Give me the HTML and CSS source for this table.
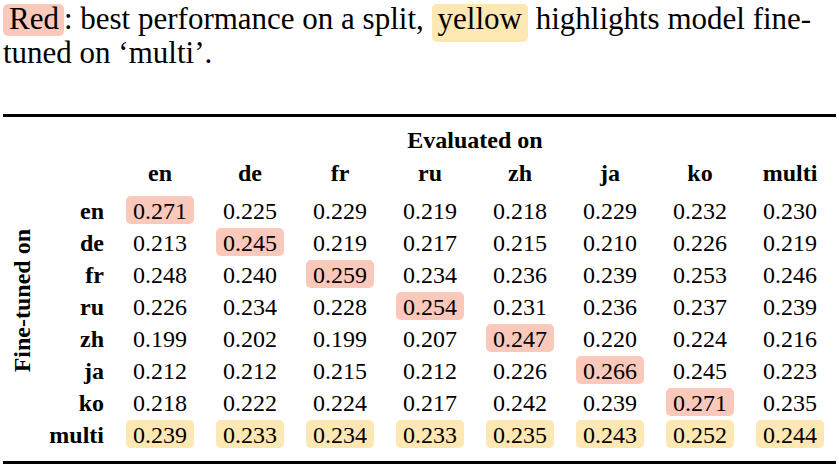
FILE: index.html
```html
<!DOCTYPE html>
<html>
<head>
<meta charset="utf-8">
<link rel="stylesheet" href="styles.css">
</head>
<body>
<p class="caption"><span class="hl red">Red</span>: best performance on a split, <span class="hl yellow">yellow</span> highlights model fine-<br>tuned on ‘multi’.</p>
<div class="table">
  <div class="grid">
    <div class="spacer"></div>
    <div class="group">Evaluated on</div>
    <div class="spacer"></div>
    <div class="colh">en</div><div class="colh">de</div><div class="colh">fr</div><div class="colh">ru</div><div class="colh">zh</div><div class="colh">ja</div><div class="colh">ko</div><div class="colh">multi</div>
    <div class="rot"><span>Fine-tuned on</span></div>

    <div class="rowh">en</div>
    <div class="c"><span class="b r">0.271</span></div><div class="c">0.225</div><div class="c">0.229</div><div class="c">0.219</div><div class="c">0.218</div><div class="c">0.229</div><div class="c">0.232</div><div class="c">0.230</div>

    <div class="rowh">de</div>
    <div class="c">0.213</div><div class="c"><span class="b r">0.245</span></div><div class="c">0.219</div><div class="c">0.217</div><div class="c">0.215</div><div class="c">0.210</div><div class="c">0.226</div><div class="c">0.219</div>

    <div class="rowh">fr</div>
    <div class="c">0.248</div><div class="c">0.240</div><div class="c"><span class="b r">0.259</span></div><div class="c">0.234</div><div class="c">0.236</div><div class="c">0.239</div><div class="c">0.253</div><div class="c">0.246</div>

    <div class="rowh">ru</div>
    <div class="c">0.226</div><div class="c">0.234</div><div class="c">0.228</div><div class="c"><span class="b r">0.254</span></div><div class="c">0.231</div><div class="c">0.236</div><div class="c">0.237</div><div class="c">0.239</div>

    <div class="rowh">zh</div>
    <div class="c">0.199</div><div class="c">0.202</div><div class="c">0.199</div><div class="c">0.207</div><div class="c"><span class="b r">0.247</span></div><div class="c">0.220</div><div class="c">0.224</div><div class="c">0.216</div>

    <div class="rowh">ja</div>
    <div class="c">0.212</div><div class="c">0.212</div><div class="c">0.215</div><div class="c">0.212</div><div class="c">0.226</div><div class="c"><span class="b r">0.266</span></div><div class="c">0.245</div><div class="c">0.223</div>

    <div class="rowh">ko</div>
    <div class="c">0.218</div><div class="c">0.222</div><div class="c">0.224</div><div class="c">0.217</div><div class="c">0.242</div><div class="c">0.239</div><div class="c"><span class="b r">0.271</span></div><div class="c">0.235</div>

    <div class="rowh">multi</div>
    <div class="c"><span class="b y">0.239</span></div><div class="c"><span class="b y">0.233</span></div><div class="c"><span class="b y">0.234</span></div><div class="c"><span class="b y">0.233</span></div><div class="c"><span class="b y">0.235</span></div><div class="c"><span class="b y">0.243</span></div><div class="c"><span class="b y">0.252</span></div><div class="c"><span class="b y">0.244</span></div>
  </div>
</div>
</body>
</html>
```
FILE: styles.css
```css
html, body {
  margin: 0;
  padding: 0;
  background: #fff;
}
body {
  font-family: "Liberation Serif", "Times New Roman", serif;
  color: #000;
  width: 839px;
  height: 467px;
  overflow: hidden;
}
.caption {
  margin: 0;
  padding: 2px 0 0 3px;
  font-size: 31px;
  line-height: 34px;
  height: 114px;
  box-sizing: border-box;
}
.hl {
  display: inline-block;
  line-height: 20px;
  padding: 5px 5px 7px 6px;
  border-radius: 5px;
}
.hl.red { background: #fbc9bb; }
.hl.yellow {
  background: #fde8b4;
  padding: 5px 6px 13px 6px;
  margin-bottom: -7px;
}

.table {
  margin-left: 3px;
  width: 833px;
  border-top: 3px solid #000;
  border-bottom: 3px solid #000;
  padding: 7px 0 10px;
  font-size: 24px;
}
.grid {
  display: grid;
  grid-template-columns: 37px 75px repeat(8, 90px);
  grid-template-rows: 33px 38px repeat(8, 32px);
  line-height: 32px;
}
.spacer {
  grid-column: span 2;
}
.group {
  grid-column: span 8;
  text-align: center;
  font-weight: bold;
}
.colh {
  text-align: center;
  font-weight: bold;
}
.rot {
  grid-column: 1;
  grid-row: 3 / span 8;
  display: flex;
  justify-content: center;
  align-items: flex-start;
  padding-top: 34px;
}
.rot span {
  writing-mode: vertical-rl;
  transform: rotate(180deg);
  font-weight: bold;
  line-height: 24px;
}
.rowh {
  text-align: right;
  padding-right: 11px;
  font-weight: bold;
}
.c {
  text-align: center;
}
.b {
  display: inline-block;
  line-height: 25px;
  padding: 3px 7px 0;
  border-radius: 5px;
}
.b.r { background: #fbc9bb; }
.b.y { background: #fde8b4; }
```
